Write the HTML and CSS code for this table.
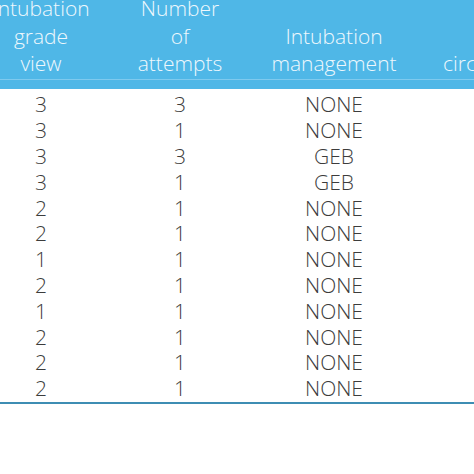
FILE: index.html
```
<!DOCTYPE html>
<html>
<head>
<meta charset="utf-8">
<link rel="stylesheet" href="styles.css">
</head>
<body>
<div class="sheet">
  <div class="head">
    <div class="hrow">
      <div class="c c1">Intubation<br>grade<br>view</div>
      <div class="c c2">Number<br>of<br>attempts</div>
      <div class="c c3">Intubation<br>management</div>
      <div class="c c4">circumstances</div>
    </div>
    <div class="hsub"></div>
  </div>
  <div class="body">
    <div class="row"><div class="c c1">3</div><div class="c c2">3</div><div class="c c3">NONE</div><div class="c c4"></div></div>
    <div class="row"><div class="c c1">3</div><div class="c c2">1</div><div class="c c3">NONE</div><div class="c c4"></div></div>
    <div class="row"><div class="c c1">3</div><div class="c c2">3</div><div class="c c3">GEB</div><div class="c c4"></div></div>
    <div class="row"><div class="c c1">3</div><div class="c c2">1</div><div class="c c3">GEB</div><div class="c c4"></div></div>
    <div class="row"><div class="c c1">2</div><div class="c c2">1</div><div class="c c3">NONE</div><div class="c c4"></div></div>
    <div class="row"><div class="c c1">2</div><div class="c c2">1</div><div class="c c3">NONE</div><div class="c c4"></div></div>
    <div class="row"><div class="c c1">1</div><div class="c c2">1</div><div class="c c3">NONE</div><div class="c c4"></div></div>
    <div class="row"><div class="c c1">2</div><div class="c c2">1</div><div class="c c3">NONE</div><div class="c c4"></div></div>
    <div class="row"><div class="c c1">1</div><div class="c c2">1</div><div class="c c3">NONE</div><div class="c c4"></div></div>
    <div class="row"><div class="c c1">2</div><div class="c c2">1</div><div class="c c3">NONE</div><div class="c c4"></div></div>
    <div class="row"><div class="c c1">2</div><div class="c c2">1</div><div class="c c3">NONE</div><div class="c c4"></div></div>
    <div class="row"><div class="c c1">2</div><div class="c c2">1</div><div class="c c3">NONE</div><div class="c c4"></div></div>
  </div>
</div>
</body>
</html>
```
FILE: styles.css
```
html, body {
  margin: 0;
  padding: 0;
  background: #ffffff;
  overflow: hidden;
}
body {
  width: 474px;
  height: 474px;
  font-family: "Open Sans", "Liberation Sans", sans-serif;
  font-weight: 300;
  font-size: 21px;
}
.sheet {
  margin-top: -5px;
  margin-left: -18px;
  width: 640px;
}
.head {
  background: #4fb7e7;
  color: #eef8fd;
}
.hrow {
  display: grid;
  grid-template-columns: 118px 160px 148px 1fr;
  align-items: end;
  line-height: 27.5px;
  padding-bottom: 1.5px;
  border-bottom: 1px solid #7fcaee;
}
.hsub {
  height: 9.3px;
}
.c {
  text-align: center;
  white-space: nowrap;
}
.c4 {
  text-align: left;
  padding-left: 35px;
}
.body {
  padding-top: 3.2px;
  color: #3c3c3c;
  border-bottom: 2px solid #3d8db3;
}
.row {
  display: grid;
  grid-template-columns: 118px 160px 148px 1fr;
  height: 25.8px;
  line-height: 25.8px;
}
```
